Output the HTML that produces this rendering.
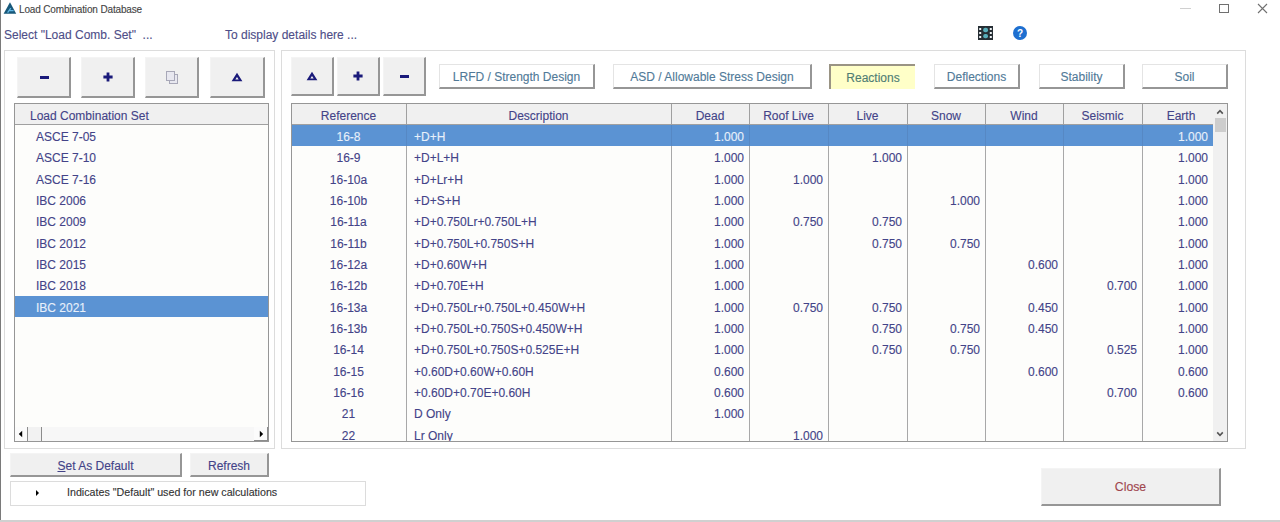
<!DOCTYPE html>
<html><head><meta charset="utf-8">
<style>
*{margin:0;padding:0;box-sizing:border-box}
html,body{-webkit-text-stroke:0.12px currentColor;width:1280px;height:522px;overflow:hidden;background:#fff;font-family:"Liberation Sans",sans-serif;font-size:12px;position:relative}
.a{position:absolute;white-space:nowrap}
.grp{position:absolute;border:1px solid #dcdcdc}
.btn{position:absolute;background:#f0f0f0;border-right:2px solid #969696;border-bottom:2px solid #969696;border-top:1px solid #f4f4f4;border-left:1px solid #f4f4f4}
.wbtn{position:absolute;background:#fff;border-right:2px solid #969696;border-bottom:2px solid #969696;border-top:1px solid #e4e4e4;border-left:1px solid #e4e4e4;color:#517a98;font-size:12px;text-align:center;line-height:24px}
.txt{color:#434388}
</style></head><body>

<div class="a" style="left:0;top:0;width:1px;height:522px;background:#7a7a7a"></div>
<div class="a" style="left:0;top:520px;width:1280px;height:2px;background:#d0d0d0"></div>
<svg class="a" style="left:0;top:0" width="20" height="16" viewBox="0 0 20 16"><path d="M10 2.2 L16.2 13.8 L3.6 13.8 Z" fill="#17587a"/><path d="M7.6 12.6 L10.8 8.2 M9.6 10.6 L13.6 10.6" stroke="#62b8e6" stroke-width="1.3" fill="none"/></svg>
<div class="a" style="left:19px;top:3px;font-size:10px;letter-spacing:-0.15px;color:#444;line-height:13px">Load Combination Database</div>
<div class="a" style="left:1180px;top:8px;width:11px;height:1px;background:#d0d0d0"></div>
<div class="a" style="left:1219px;top:4px;width:10px;height:9px;border:1px solid #707070"></div>
<svg class="a" style="left:1257px;top:3px" width="11" height="11" viewBox="0 0 11 11"><path d="M1 1 L10 10 M10 1 L1 10" stroke="#707070" stroke-width="1.1"/></svg>
<div class="a" style="left:4px;top:28px;color:#4e4e88;font-size:12px;line-height:14px">Select "Load Comb. Set"&nbsp; ...</div>
<div class="a" style="left:225px;top:28px;color:#4e4e88;font-size:12px;line-height:14px">To display details here ...</div>
<svg class="a" style="left:978px;top:26px" width="15" height="14" viewBox="0 0 15 14"><rect x="0" y="0" width="15" height="14" fill="#262e34"/><rect x="5.2" y="1.8" width="4.8" height="4.4" rx="2" fill="#58aebb"/><rect x="5.2" y="7.9" width="4.8" height="4.4" rx="2" fill="#58aebb"/>
<rect x="1.2" y="2" width="2" height="2" fill="#eef2f4"/><rect x="1.2" y="6" width="2" height="2" fill="#eef2f4"/><rect x="1.2" y="10" width="2" height="2" fill="#eef2f4"/>
<rect x="11.8" y="2" width="2" height="2" fill="#eef2f4"/><rect x="11.8" y="6" width="2" height="2" fill="#eef2f4"/><rect x="11.8" y="10" width="2" height="2" fill="#eef2f4"/></svg>
<svg class="a" style="left:1012px;top:25px" width="16" height="16" viewBox="0 0 16 16"><circle cx="8" cy="8" r="7" fill="#1e6fd0"/><text x="8" y="12" font-family="Liberation Sans" font-size="10" font-weight="bold" fill="#fff" text-anchor="middle">?</text></svg>
<div class="grp" style="left:4px;top:50px;width:271px;height:399px"></div>
<div class="grp" style="left:281px;top:50px;width:965px;height:399px"></div>
<div class="btn" style="left:17px;top:57px;width:54px;height:41px"></div>
<div class="btn" style="left:81px;top:57px;width:54px;height:41px"></div>
<div class="btn" style="left:145px;top:57px;width:54px;height:41px"></div>
<div class="btn" style="left:210px;top:57px;width:55px;height:41px"></div>
<div class="a" style="left:39.5px;top:75.5px;width:9px;height:3px;background:#1a1a7a"></div>
<svg class="a" style="left:103px;top:72px" width="10" height="10" viewBox="0 0 10 10"><path d="M0.4 3.6 H3.6 V0.4 H6.4 V3.6 H9.6 V6.4 H6.4 V9.6 H3.6 V6.4 H0.4 Z" fill="#1a1a7a"/></svg>
<svg class="a" style="left:230.5px;top:72px" width="12" height="10" viewBox="0 0 12 10"><path d="M6 0.8 L11.4 9.3 L0.6 9.3 Z M6 5.0 L7.7 7.6 L4.3 7.6 Z" fill="#1a1a7a" fill-rule="evenodd"/></svg>
<svg class="a" style="left:165px;top:70px" width="15" height="15" viewBox="0 0 15 15"><rect x="4.5" y="4.5" width="8" height="9" fill="#e8e8f0" stroke="#a8a8b8"/><rect x="1.5" y="1.5" width="8" height="9" fill="#e8e8f0" stroke="#a8a8b8"/></svg>
<div class="a" style="left:14px;top:103px;width:255px;height:339px;background:#fdfdfb;border:1px solid #969696"></div>
<div class="a" style="left:15px;top:104px;width:253px;height:21px;background:#f0f0f0;border-bottom:1px solid #a0a0a0"></div>
<div class="a txt" style="left:30px;top:109px;line-height:14px">Load Combination Set</div>
<div class="a txt" style="left:36px;top:130px;line-height:14px">ASCE 7-05</div>
<div class="a txt" style="left:36px;top:151px;line-height:14px">ASCE 7-10</div>
<div class="a txt" style="left:36px;top:173px;line-height:14px">ASCE 7-16</div>
<div class="a txt" style="left:36px;top:194px;line-height:14px">IBC 2006</div>
<div class="a txt" style="left:36px;top:215px;line-height:14px">IBC 2009</div>
<div class="a txt" style="left:36px;top:237px;line-height:14px">IBC 2012</div>
<div class="a txt" style="left:36px;top:258px;line-height:14px">IBC 2015</div>
<div class="a txt" style="left:36px;top:279px;line-height:14px">IBC 2018</div>
<div class="a" style="left:15px;top:296px;width:253px;height:21px;background:#5b93d3"></div>
<div class="a" style="left:36px;top:301px;line-height:14px;color:#e8f0fa">IBC 2021</div>
<div class="a" style="left:15px;top:427px;width:253px;height:14px;background:#f7f7f7"></div>
<div class="a" style="left:15px;top:427px;width:13px;height:14px;background:#fbfbfb;border-right:1px solid #8c8c8c"></div>
<div class="a" style="left:28px;top:427px;width:14px;height:14px;background:#f2f2f2;border-right:1px solid #8c8c8c"></div>
<svg class="a" style="left:18px;top:430px" width="6" height="8" viewBox="0 0 6 8"><path d="M4.2 0.8 L0.8 4 L4.2 7.2 Z" fill="#000"/></svg>
<div class="a" style="left:254px;top:427px;width:14px;height:14px;background:#fbfbfb;border-right:1px solid #8c8c8c;border-bottom:1px solid #8c8c8c"></div>
<svg class="a" style="left:259px;top:430px" width="6" height="8" viewBox="0 0 6 8"><path d="M0.8 0.8 L4.2 4 L0.8 7.2 Z" fill="#000"/></svg>
<div class="btn txt" style="left:10px;top:453px;width:172px;height:24px;text-align:center;line-height:24px"><span style="text-decoration:underline">S</span>et As Default</div>
<div class="btn txt" style="left:190px;top:453px;width:79px;height:24px;text-align:center;line-height:24px">Refresh</div>
<div class="a" style="left:10px;top:481px;width:356px;height:25px;border:1px solid #dcdcdc"></div>
<svg class="a" style="left:35px;top:489px" width="6" height="8" viewBox="0 0 6 8"><path d="M1 1 L4 4 L1 7 Z" fill="#000"/></svg>
<div class="a" style="left:67px;top:485px;font-size:10.7px;color:#333;line-height:14px">Indicates "Default" used for new calculations</div>
<div class="btn" style="left:1041px;top:468px;width:180px;height:38px;text-align:center;line-height:37px;color:#a0464e;font-size:12.3px">Close</div>
<div class="btn" style="left:291px;top:57px;width:43px;height:39px"></div>
<div class="btn" style="left:337px;top:57px;width:43px;height:39px"></div>
<div class="btn" style="left:383px;top:57px;width:43px;height:39px"></div>
<svg class="a" style="left:305.6px;top:70.7px" width="12" height="10" viewBox="0 0 12 10"><path d="M6 0.8 L11.4 9.3 L0.6 9.3 Z M6 5.0 L7.7 7.6 L4.3 7.6 Z" fill="#1a1a7a" fill-rule="evenodd"/></svg>
<svg class="a" style="left:352.5px;top:70.9px" width="10" height="10" viewBox="0 0 10 10"><path d="M0.4 3.6 H3.6 V0.4 H6.4 V3.6 H9.6 V6.4 H6.4 V9.6 H3.6 V6.4 H0.4 Z" fill="#1a1a7a"/></svg>
<div class="a" style="left:399.7px;top:74.5px;width:9px;height:3px;background:#1a1a7a"></div>
<div class="wbtn" style="left:439px;top:64px;width:156px;height:25px">LRFD / Strength Design</div>
<div class="wbtn" style="left:613px;top:64px;width:199px;height:25px">ASD / Allowable Stress Design</div>
<div class="wbtn" style="left:934px;top:64px;width:86px;height:25px">Deflections</div>
<div class="wbtn" style="left:1039px;top:64px;width:86px;height:25px">Stability</div>
<div class="wbtn" style="left:1142px;top:64px;width:86px;height:25px">Soil</div>
<div class="a" style="left:829px;top:64px;width:86px;height:25px;background:#ffffc8;border-left:2px solid #9a9484;border-top:2px solid #9a9484;color:#4f7d74;font-size:12px;text-align:center;line-height:25px">Reactions</div>
<div class="a" style="left:291px;top:103px;width:937px;height:339px;background:#fdfdfb;border:1px solid #969696;overflow:hidden">
<div class="a" style="left:0;top:0;width:921px;height:21px;background:#f0f0f0;border-bottom:1px solid #a0a0a0"></div>
<div class="a txt" style="left:-1px;top:5px;width:115px;text-align:center;line-height:14px">Reference</div>
<div class="a txt" style="left:114px;top:5px;width:265px;text-align:center;line-height:14px">Description</div>
<div class="a txt" style="left:379px;top:5px;width:78px;text-align:center;line-height:14px">Dead</div>
<div class="a txt" style="left:457px;top:5px;width:79px;text-align:center;line-height:14px">Roof Live</div>
<div class="a txt" style="left:536px;top:5px;width:79px;text-align:center;line-height:14px">Live</div>
<div class="a txt" style="left:615px;top:5px;width:78px;text-align:center;line-height:14px">Snow</div>
<div class="a txt" style="left:693px;top:5px;width:78px;text-align:center;line-height:14px">Wind</div>
<div class="a txt" style="left:771px;top:5px;width:79px;text-align:center;line-height:14px">Seismic</div>
<div class="a txt" style="left:850px;top:5px;width:78px;text-align:center;line-height:14px">Earth</div>
<div class="a" style="left:0;top:21px;width:921px;height:21px;background:#5b93d3"></div>
<div class="a" style="left:-1px;top:26px;width:115px;text-align:center;line-height:14px;color:#e8f0fa">16-8</div>
<div class="a" style="left:122px;top:26px;line-height:14px;color:#e8f0fa">+D+H</div>
<div class="a" style="left:379px;top:26px;width:73px;text-align:right;line-height:14px;color:#e8f0fa">1.000</div>
<div class="a" style="left:850px;top:26px;width:66px;text-align:right;line-height:14px;color:#e8f0fa">1.000</div>
<div class="a" style="left:-1px;top:47px;width:115px;text-align:center;line-height:14px;color:#434388">16-9</div>
<div class="a" style="left:122px;top:47px;line-height:14px;color:#434388">+D+L+H</div>
<div class="a" style="left:379px;top:47px;width:73px;text-align:right;line-height:14px;color:#434388">1.000</div>
<div class="a" style="left:536px;top:47px;width:74px;text-align:right;line-height:14px;color:#434388">1.000</div>
<div class="a" style="left:850px;top:47px;width:66px;text-align:right;line-height:14px;color:#434388">1.000</div>
<div class="a" style="left:-1px;top:69px;width:115px;text-align:center;line-height:14px;color:#434388">16-10a</div>
<div class="a" style="left:122px;top:69px;line-height:14px;color:#434388">+D+Lr+H</div>
<div class="a" style="left:379px;top:69px;width:73px;text-align:right;line-height:14px;color:#434388">1.000</div>
<div class="a" style="left:457px;top:69px;width:74px;text-align:right;line-height:14px;color:#434388">1.000</div>
<div class="a" style="left:850px;top:69px;width:66px;text-align:right;line-height:14px;color:#434388">1.000</div>
<div class="a" style="left:-1px;top:90px;width:115px;text-align:center;line-height:14px;color:#434388">16-10b</div>
<div class="a" style="left:122px;top:90px;line-height:14px;color:#434388">+D+S+H</div>
<div class="a" style="left:379px;top:90px;width:73px;text-align:right;line-height:14px;color:#434388">1.000</div>
<div class="a" style="left:615px;top:90px;width:73px;text-align:right;line-height:14px;color:#434388">1.000</div>
<div class="a" style="left:850px;top:90px;width:66px;text-align:right;line-height:14px;color:#434388">1.000</div>
<div class="a" style="left:-1px;top:111px;width:115px;text-align:center;line-height:14px;color:#434388">16-11a</div>
<div class="a" style="left:122px;top:111px;line-height:14px;color:#434388">+D+0.750Lr+0.750L+H</div>
<div class="a" style="left:379px;top:111px;width:73px;text-align:right;line-height:14px;color:#434388">1.000</div>
<div class="a" style="left:457px;top:111px;width:74px;text-align:right;line-height:14px;color:#434388">0.750</div>
<div class="a" style="left:536px;top:111px;width:74px;text-align:right;line-height:14px;color:#434388">0.750</div>
<div class="a" style="left:850px;top:111px;width:66px;text-align:right;line-height:14px;color:#434388">1.000</div>
<div class="a" style="left:-1px;top:133px;width:115px;text-align:center;line-height:14px;color:#434388">16-11b</div>
<div class="a" style="left:122px;top:133px;line-height:14px;color:#434388">+D+0.750L+0.750S+H</div>
<div class="a" style="left:379px;top:133px;width:73px;text-align:right;line-height:14px;color:#434388">1.000</div>
<div class="a" style="left:536px;top:133px;width:74px;text-align:right;line-height:14px;color:#434388">0.750</div>
<div class="a" style="left:615px;top:133px;width:73px;text-align:right;line-height:14px;color:#434388">0.750</div>
<div class="a" style="left:850px;top:133px;width:66px;text-align:right;line-height:14px;color:#434388">1.000</div>
<div class="a" style="left:-1px;top:154px;width:115px;text-align:center;line-height:14px;color:#434388">16-12a</div>
<div class="a" style="left:122px;top:154px;line-height:14px;color:#434388">+D+0.60W+H</div>
<div class="a" style="left:379px;top:154px;width:73px;text-align:right;line-height:14px;color:#434388">1.000</div>
<div class="a" style="left:693px;top:154px;width:73px;text-align:right;line-height:14px;color:#434388">0.600</div>
<div class="a" style="left:850px;top:154px;width:66px;text-align:right;line-height:14px;color:#434388">1.000</div>
<div class="a" style="left:-1px;top:175px;width:115px;text-align:center;line-height:14px;color:#434388">16-12b</div>
<div class="a" style="left:122px;top:175px;line-height:14px;color:#434388">+D+0.70E+H</div>
<div class="a" style="left:379px;top:175px;width:73px;text-align:right;line-height:14px;color:#434388">1.000</div>
<div class="a" style="left:771px;top:175px;width:74px;text-align:right;line-height:14px;color:#434388">0.700</div>
<div class="a" style="left:850px;top:175px;width:66px;text-align:right;line-height:14px;color:#434388">1.000</div>
<div class="a" style="left:-1px;top:197px;width:115px;text-align:center;line-height:14px;color:#434388">16-13a</div>
<div class="a" style="left:122px;top:197px;line-height:14px;color:#434388">+D+0.750Lr+0.750L+0.450W+H</div>
<div class="a" style="left:379px;top:197px;width:73px;text-align:right;line-height:14px;color:#434388">1.000</div>
<div class="a" style="left:457px;top:197px;width:74px;text-align:right;line-height:14px;color:#434388">0.750</div>
<div class="a" style="left:536px;top:197px;width:74px;text-align:right;line-height:14px;color:#434388">0.750</div>
<div class="a" style="left:693px;top:197px;width:73px;text-align:right;line-height:14px;color:#434388">0.450</div>
<div class="a" style="left:850px;top:197px;width:66px;text-align:right;line-height:14px;color:#434388">1.000</div>
<div class="a" style="left:-1px;top:218px;width:115px;text-align:center;line-height:14px;color:#434388">16-13b</div>
<div class="a" style="left:122px;top:218px;line-height:14px;color:#434388">+D+0.750L+0.750S+0.450W+H</div>
<div class="a" style="left:379px;top:218px;width:73px;text-align:right;line-height:14px;color:#434388">1.000</div>
<div class="a" style="left:536px;top:218px;width:74px;text-align:right;line-height:14px;color:#434388">0.750</div>
<div class="a" style="left:615px;top:218px;width:73px;text-align:right;line-height:14px;color:#434388">0.750</div>
<div class="a" style="left:693px;top:218px;width:73px;text-align:right;line-height:14px;color:#434388">0.450</div>
<div class="a" style="left:850px;top:218px;width:66px;text-align:right;line-height:14px;color:#434388">1.000</div>
<div class="a" style="left:-1px;top:239px;width:115px;text-align:center;line-height:14px;color:#434388">16-14</div>
<div class="a" style="left:122px;top:239px;line-height:14px;color:#434388">+D+0.750L+0.750S+0.525E+H</div>
<div class="a" style="left:379px;top:239px;width:73px;text-align:right;line-height:14px;color:#434388">1.000</div>
<div class="a" style="left:536px;top:239px;width:74px;text-align:right;line-height:14px;color:#434388">0.750</div>
<div class="a" style="left:615px;top:239px;width:73px;text-align:right;line-height:14px;color:#434388">0.750</div>
<div class="a" style="left:771px;top:239px;width:74px;text-align:right;line-height:14px;color:#434388">0.525</div>
<div class="a" style="left:850px;top:239px;width:66px;text-align:right;line-height:14px;color:#434388">1.000</div>
<div class="a" style="left:-1px;top:261px;width:115px;text-align:center;line-height:14px;color:#434388">16-15</div>
<div class="a" style="left:122px;top:261px;line-height:14px;color:#434388">+0.60D+0.60W+0.60H</div>
<div class="a" style="left:379px;top:261px;width:73px;text-align:right;line-height:14px;color:#434388">0.600</div>
<div class="a" style="left:693px;top:261px;width:73px;text-align:right;line-height:14px;color:#434388">0.600</div>
<div class="a" style="left:850px;top:261px;width:66px;text-align:right;line-height:14px;color:#434388">0.600</div>
<div class="a" style="left:-1px;top:282px;width:115px;text-align:center;line-height:14px;color:#434388">16-16</div>
<div class="a" style="left:122px;top:282px;line-height:14px;color:#434388">+0.60D+0.70E+0.60H</div>
<div class="a" style="left:379px;top:282px;width:73px;text-align:right;line-height:14px;color:#434388">0.600</div>
<div class="a" style="left:771px;top:282px;width:74px;text-align:right;line-height:14px;color:#434388">0.700</div>
<div class="a" style="left:850px;top:282px;width:66px;text-align:right;line-height:14px;color:#434388">0.600</div>
<div class="a" style="left:-1px;top:303px;width:115px;text-align:center;line-height:14px;color:#434388">21</div>
<div class="a" style="left:122px;top:303px;line-height:14px;color:#434388">D Only</div>
<div class="a" style="left:379px;top:303px;width:73px;text-align:right;line-height:14px;color:#434388">1.000</div>
<div class="a" style="left:-1px;top:325px;width:115px;text-align:center;line-height:14px;color:#434388">22</div>
<div class="a" style="left:122px;top:325px;line-height:14px;color:#434388">Lr Only</div>
<div class="a" style="left:457px;top:325px;width:74px;text-align:right;line-height:14px;color:#434388">1.000</div>
<div class="a" style="left:114px;top:0;width:1px;height:21px;background:#a0a0a0"></div>
<div class="a" style="left:114px;top:42px;width:1px;height:300px;background:#a8a8a8"></div>
<div class="a" style="left:114px;top:21px;width:1px;height:21px;background:#5688c4"></div>
<div class="a" style="left:379px;top:0;width:1px;height:21px;background:#a0a0a0"></div>
<div class="a" style="left:379px;top:42px;width:1px;height:300px;background:#a8a8a8"></div>
<div class="a" style="left:379px;top:21px;width:1px;height:21px;background:#5688c4"></div>
<div class="a" style="left:457px;top:0;width:1px;height:21px;background:#a0a0a0"></div>
<div class="a" style="left:457px;top:42px;width:1px;height:300px;background:#a8a8a8"></div>
<div class="a" style="left:457px;top:21px;width:1px;height:21px;background:#5688c4"></div>
<div class="a" style="left:536px;top:0;width:1px;height:21px;background:#a0a0a0"></div>
<div class="a" style="left:536px;top:42px;width:1px;height:300px;background:#a8a8a8"></div>
<div class="a" style="left:536px;top:21px;width:1px;height:21px;background:#5688c4"></div>
<div class="a" style="left:615px;top:0;width:1px;height:21px;background:#a0a0a0"></div>
<div class="a" style="left:615px;top:42px;width:1px;height:300px;background:#a8a8a8"></div>
<div class="a" style="left:615px;top:21px;width:1px;height:21px;background:#5688c4"></div>
<div class="a" style="left:693px;top:0;width:1px;height:21px;background:#a0a0a0"></div>
<div class="a" style="left:693px;top:42px;width:1px;height:300px;background:#a8a8a8"></div>
<div class="a" style="left:693px;top:21px;width:1px;height:21px;background:#5688c4"></div>
<div class="a" style="left:771px;top:0;width:1px;height:21px;background:#a0a0a0"></div>
<div class="a" style="left:771px;top:42px;width:1px;height:300px;background:#a8a8a8"></div>
<div class="a" style="left:771px;top:21px;width:1px;height:21px;background:#5688c4"></div>
<div class="a" style="left:850px;top:0;width:1px;height:21px;background:#a0a0a0"></div>
<div class="a" style="left:850px;top:42px;width:1px;height:300px;background:#a8a8a8"></div>
<div class="a" style="left:850px;top:21px;width:1px;height:21px;background:#5688c4"></div>
<div class="a" style="left:921px;top:0;width:14px;height:340px;background:#f0f0f0"></div>
<div class="a" style="left:923px;top:14px;width:11px;height:14px;background:#cdcdcd"></div>
<svg class="a" style="left:924px;top:5px" width="9" height="6" viewBox="0 0 9 6"><path d="M1.2 4.6 L4 1.6 L6.8 4.6" fill="none" stroke="#555" stroke-width="1.6"/></svg>
<svg class="a" style="left:924px;top:327px" width="9" height="6" viewBox="0 0 9 6"><path d="M1.2 1.4 L4 4.4 L6.8 1.4" fill="none" stroke="#555" stroke-width="1.6"/></svg>
</div>
</body></html>
